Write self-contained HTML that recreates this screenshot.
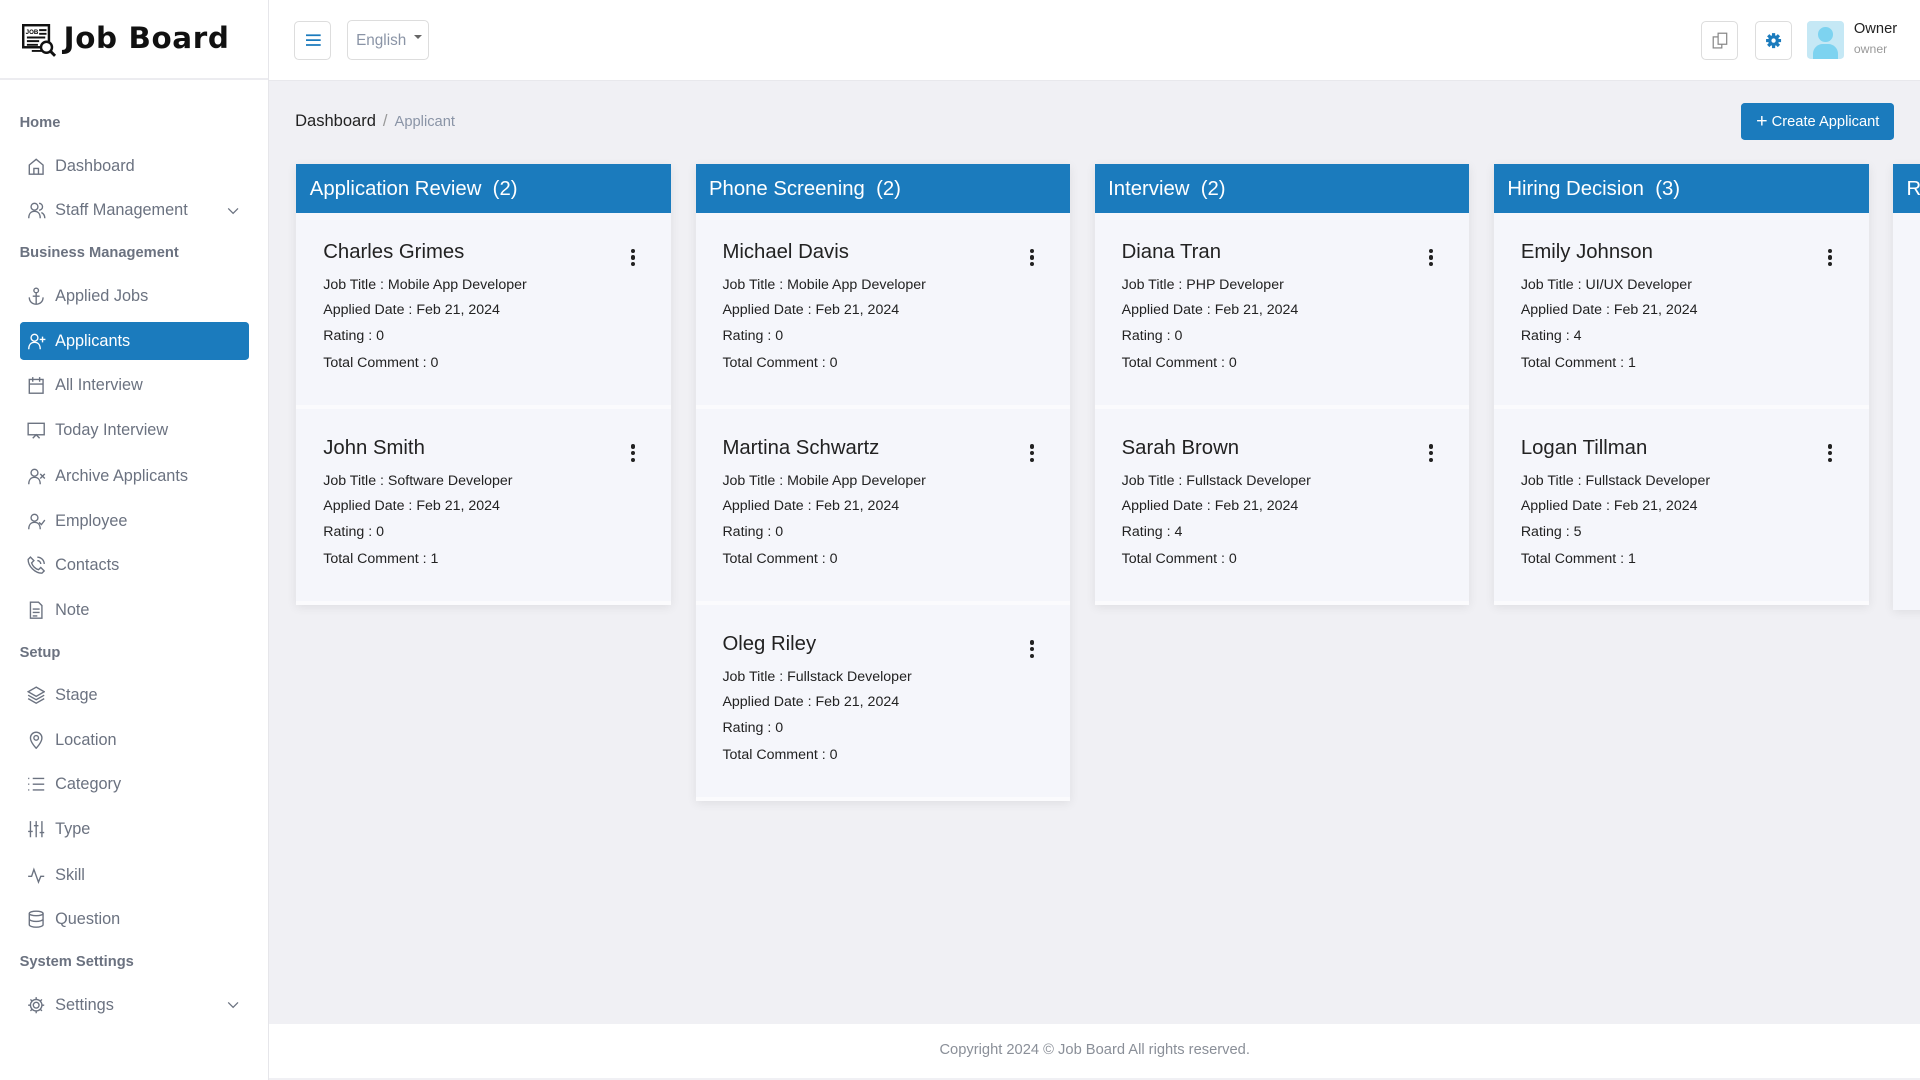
<!DOCTYPE html>
<html><head><meta charset="utf-8"><style>
html,body{margin:0;padding:0;}
body{width:1568px;height:882px;zoom:1.22449;position:relative;overflow:hidden;background:#f0f0f4;font-family:"Liberation Sans",sans-serif;color:#222;}
.a{position:absolute;}
#sb{left:0;top:0;width:219px;height:882px;background:#fff;border-right:1px solid #e6e6ea;}
#logo{left:0;top:0;width:219px;height:64px;border-bottom:2px solid #ececf0;}
.sec{left:16px;font-size:12px;font-weight:bold;color:#6b7280;}
.it{left:45px;font-size:13.3px;color:#6b7280;}
#hdr{left:220px;top:0;width:1348px;height:65px;background:#fff;border-bottom:1px solid #e8e8ec;}
.btn{border:1px solid #ddd;border-radius:4px;background:#fff;}
.col{width:306px;background:#f5f6fb;box-shadow:0 2px 8px rgba(0,0,0,.08);}
.ch{height:40px;background:#1b7bbd;color:#fff;font-size:16.6px;line-height:41px;padding-left:11px;box-sizing:border-box;}
.card{position:relative;height:160px;border-bottom:4px solid #fbfbfd;box-sizing:border-box;}
.card .n{position:absolute;left:22px;top:23px;font-size:16.6px;color:#222;}
.card .l{position:absolute;left:22px;font-size:11.6px;color:#222;}
.dots{position:absolute;left:273px;top:29px;width:4px;}
.dots i{display:block;width:3.5px;height:3.5px;border-radius:50%;background:#222;margin-bottom:2px;}
</style></head><body>
<div id="sb" class="a"></div>
<div id="logo" class="a">
<svg class="a" style="left:18px;top:20px" width="28" height="28" viewBox="0 0 28 28"><rect x="1" y="1" width="21" height="18" fill="none" stroke="#111" stroke-width="2"/><text x="3" y="8" font-size="5" font-weight="bold" font-family="Liberation Sans">JOB</text><path d="M14 5h6M14 8h6M4 11h15M4 14h10M4 17h9M8 22h8" stroke="#111" stroke-width="1.6"/><circle cx="20" cy="19" r="4.5" fill="#fff" stroke="#111" stroke-width="2"/><path d="M23 22l4 4" stroke="#111" stroke-width="2.4"/></svg>
<div class="a" style="left:52px;top:17px;font-size:24px;font-weight:900;letter-spacing:.5px;color:#111;font-family:'DejaVu Sans','Liberation Sans',sans-serif;">Job Board</div>
</div>
<div class="a sec" style="top:94px">Home</div>
<div class="a sec" style="top:200px">Business Management</div>
<div class="a sec" style="top:527px">Setup</div>
<div class="a sec" style="top:779px">System Settings</div>
<div class="a" style="left:16px;top:263px;width:187px;height:31px;background:#1b7bbd;border-radius:3px;"></div>
<svg class="a" style="left:22px;top:128px" width="15" height="15" viewBox="0 0 16 16" fill="none" stroke="#6b7280" stroke-width="1.2"><path d="M2 7l6-5 6 5v8H2z M6 15v-5h4v5"/></svg>
<div class="a it" style="top:128px">Dashboard</div>
<svg class="a" style="left:22px;top:164px" width="16" height="15" viewBox="0 0 16 16" fill="none" stroke="#6b7280" stroke-width="1.2"><circle cx="6" cy="5" r="3"/><path d="M1 15c0-4 2-6 5-6s5 2 5 6M10 2a3 3 0 010 6M12 10c2 1 3 3 3 5"/></svg>
<div class="a it" style="top:164px">Staff Management</div>
<svg class="a" style="left:185px;top:168px" width="10" height="8" viewBox="0 0 10 8" fill="none" stroke="#6b7280"><path d="M1 2l4 4 4-4"/></svg>
<svg class="a" style="left:22px;top:234px" width="15" height="15" viewBox="0 0 16 16" fill="none" stroke="#6b7280" stroke-width="1.2"><circle cx="8" cy="3" r="2"/><path d="M8 5v10M2 9c0 4 3 6 6 6s6-2 6-6M5 8h6"/></svg>
<div class="a it" style="top:234px">Applied Jobs</div>
<svg class="a" style="left:22px;top:271px" width="16" height="15" viewBox="0 0 16 16" fill="none" stroke="#fff" stroke-width="1.2"><circle cx="6" cy="5" r="3"/><path d="M1 15c0-4 2-6 5-6s5 2 5 6M13 4v5M10.5 6.5h5"/></svg>
<div class="a it" style="top:271px;color:#fff">Applicants</div>
<svg class="a" style="left:22px;top:307px" width="15" height="15" viewBox="0 0 16 16" fill="none" stroke="#6b7280" stroke-width="1.2"><rect x="2" y="3" width="12" height="12"/><path d="M2 7h12M5 1v4M11 1v4"/></svg>
<div class="a it" style="top:307px">All Interview</div>
<svg class="a" style="left:22px;top:344px" width="15" height="15" viewBox="0 0 16 16" fill="none" stroke="#6b7280" stroke-width="1.2"><rect x="1" y="2" width="14" height="10"/><path d="M5 15l3-3 3 3"/></svg>
<div class="a it" style="top:344px">Today Interview</div>
<svg class="a" style="left:22px;top:381px" width="16" height="15" viewBox="0 0 16 16" fill="none" stroke="#6b7280" stroke-width="1.2"><circle cx="6" cy="5" r="3"/><path d="M1 15c0-4 2-6 5-6s5 2 5 6M11 6l4 4M15 6l-4 4"/></svg>
<div class="a it" style="top:381px">Archive Applicants</div>
<svg class="a" style="left:22px;top:418px" width="16" height="15" viewBox="0 0 16 16" fill="none" stroke="#6b7280" stroke-width="1.2"><circle cx="6" cy="5" r="3"/><path d="M1 15c0-4 2-6 5-6s5 2 5 6M10 9l2 2 3-4"/></svg>
<div class="a it" style="top:418px">Employee</div>
<svg class="a" style="left:22px;top:454px" width="15" height="15" viewBox="0 0 16 16" fill="none" stroke="#6b7280" stroke-width="1.2"><path d="M3 1l3 3-2 2c1 3 3 5 6 6l2-2 3 3-2 2C7 15 1 9 1 3z M9 1a6 6 0 016 6M9 4a3 3 0 013 3"/></svg>
<div class="a it" style="top:454px">Contacts</div>
<svg class="a" style="left:22px;top:491px" width="15" height="15" viewBox="0 0 16 16" fill="none" stroke="#6b7280" stroke-width="1.2"><path d="M3 1h7l3 3v11H3z M5 7h6M5 10h6M5 13h4"/></svg>
<div class="a it" style="top:491px">Note</div>
<svg class="a" style="left:22px;top:560px" width="15" height="15" viewBox="0 0 16 16" fill="none" stroke="#6b7280" stroke-width="1.2"><path d="M8 1l7 4-7 4-7-4z M1 8l7 4 7-4M1 11l7 4 7-4"/></svg>
<div class="a it" style="top:560px">Stage</div>
<svg class="a" style="left:22px;top:597px" width="15" height="15" viewBox="0 0 16 16" fill="none" stroke="#6b7280" stroke-width="1.2"><path d="M8 15s5-5 5-9a5 5 0 00-10 0c0 4 5 9 5 9z"/><circle cx="8" cy="6" r="2"/></svg>
<div class="a it" style="top:597px">Location</div>
<svg class="a" style="left:22px;top:633px" width="15" height="15" viewBox="0 0 16 16" fill="none" stroke="#6b7280" stroke-width="1.2"><path d="M5 3h10M5 8h10M5 13h10M1 3h1M1 8h1M1 13h1"/></svg>
<div class="a it" style="top:633px">Category</div>
<svg class="a" style="left:22px;top:670px" width="15" height="15" viewBox="0 0 16 16" fill="none" stroke="#6b7280" stroke-width="1.2"><path d="M3 1v14M8 1v14M13 1v14M1 10h4M6 5h4M11 11h4"/></svg>
<div class="a it" style="top:670px">Type</div>
<svg class="a" style="left:22px;top:707px" width="15" height="15" viewBox="0 0 16 16" fill="none" stroke="#6b7280" stroke-width="1.2"><path d="M1 9h3l2-6 4 11 2-5h3"/></svg>
<div class="a it" style="top:707px">Skill</div>
<svg class="a" style="left:22px;top:743px" width="15" height="15" viewBox="0 0 16 16" fill="none" stroke="#6b7280" stroke-width="1.2"><ellipse cx="8" cy="3" rx="6" ry="2"/><path d="M2 3v10c0 1 3 2 6 2s6-1 6-2V3M2 8c0 1 3 2 6 2s6-1 6-2"/></svg>
<div class="a it" style="top:743px">Question</div>
<svg class="a" style="left:22px;top:813px" width="15" height="15" viewBox="0 0 16 16" fill="none" stroke="#6b7280" stroke-width="1.2"><circle cx="8" cy="8" r="2.5"/><path d="M8 1v2M8 13v2M1 8h2M13 8h2M3 3l1.5 1.5M11.5 11.5L13 13M3 13l1.5-1.5M11.5 4.5L13 3"/><circle cx="8" cy="8" r="5"/></svg>
<div class="a it" style="top:813px">Settings</div>
<svg class="a" style="left:185px;top:817px" width="10" height="8" viewBox="0 0 10 8" fill="none" stroke="#6b7280"><path d="M1 2l4 4 4-4"/></svg>

<div id="hdr" class="a"></div>
<div class="a btn" style="left:240px;top:17px;width:29px;height:30px;"><svg class="a" style="left:9px;top:10px" width="12" height="10" viewBox="0 0 12 10" stroke="#1b7bbd" stroke-width="1.4"><path d="M0 1h12M0 5h12M0 9h12"/></svg></div>
<div class="a btn" style="left:283px;top:16px;width:66px;height:31px;"><span class="a" style="left:7px;top:9px;font-size:12.5px;color:#8a94a6">English</span><span class="a" style="left:54px;top:12px;border:4px solid transparent;border-top:4px solid #666;"></span></div>
<div class="a btn" style="left:1389px;top:17px;width:29px;height:30px;"><svg class="a" style="left:8px;top:8px" width="14" height="14" viewBox="0 0 14 14" fill="none" stroke="#888" stroke-width="1"><rect x="1" y="4" width="7" height="9"/><rect x="5" y="1" width="7" height="9" fill="#fff"/></svg></div>
<div class="a btn" style="left:1433px;top:17px;width:29px;height:30px;"><svg class="a" style="left:8px;top:8px" width="14" height="14" viewBox="0 0 16 16"><circle cx="8" cy="8" r="5" fill="#1b7bbd"/><path d="M8 1v14M1 8h14M3 3l10 10M13 3L3 13" stroke="#1b7bbd" stroke-width="3"/><circle cx="8" cy="8" r="2" fill="#fff"/></svg></div>
<div class="a" style="left:1476px;top:17px;width:30px;height:31px;background:#c5e8f5;border-radius:3px;overflow:hidden;"><div class="a" style="left:9px;top:5px;width:12px;height:12px;border-radius:50%;background:#7dd3f0"></div><div class="a" style="left:5px;top:19px;width:20px;height:14px;border-radius:8px 8px 0 0;background:#7dd3f0"></div></div>
<div class="a" style="left:1514px;top:17px;font-size:12px;color:#222">Owner</div>
<div class="a" style="left:1514px;top:34px;font-size:10px;color:#999">owner</div>

<div class="a" style="left:241px;top:91px;font-size:13.5px;color:#222">Dashboard <span style="color:#999;margin:0 2px">/</span> <span style="color:#8a94a6;font-size:12px">Applicant</span></div>
<div class="a" style="left:1422px;top:84px;width:125px;height:30px;background:#1b7bbd;border-radius:3px;color:#fff;font-size:12px;line-height:30px;text-align:center;"><span style="font-size:16px;vertical-align:-1px">+</span> Create Applicant</div>

<div class="a col" style="left:242px;top:134px;">
<div class="ch">Application Review&nbsp; (2)</div>
<div class="card"><div class="n">Charles Grimes</div><div class="dots"><i></i><i></i><i></i></div><div class="l" style="top:52px">Job Title : Mobile App Developer</div><div class="l" style="top:73px">Applied Date : Feb 21, 2024</div><div class="l" style="top:94px">Rating : 0</div><div class="l" style="top:116px">Total Comment : 0</div></div>
<div class="card"><div class="n">John Smith</div><div class="dots"><i></i><i></i><i></i></div><div class="l" style="top:52px">Job Title : Software Developer</div><div class="l" style="top:73px">Applied Date : Feb 21, 2024</div><div class="l" style="top:94px">Rating : 0</div><div class="l" style="top:116px">Total Comment : 1</div></div>
</div>
<div class="a col" style="left:568px;top:134px;">
<div class="ch">Phone Screening&nbsp; (2)</div>
<div class="card"><div class="n">Michael Davis</div><div class="dots"><i></i><i></i><i></i></div><div class="l" style="top:52px">Job Title : Mobile App Developer</div><div class="l" style="top:73px">Applied Date : Feb 21, 2024</div><div class="l" style="top:94px">Rating : 0</div><div class="l" style="top:116px">Total Comment : 0</div></div>
<div class="card"><div class="n">Martina Schwartz</div><div class="dots"><i></i><i></i><i></i></div><div class="l" style="top:52px">Job Title : Mobile App Developer</div><div class="l" style="top:73px">Applied Date : Feb 21, 2024</div><div class="l" style="top:94px">Rating : 0</div><div class="l" style="top:116px">Total Comment : 0</div></div>
<div class="card"><div class="n">Oleg Riley</div><div class="dots"><i></i><i></i><i></i></div><div class="l" style="top:52px">Job Title : Fullstack Developer</div><div class="l" style="top:73px">Applied Date : Feb 21, 2024</div><div class="l" style="top:94px">Rating : 0</div><div class="l" style="top:116px">Total Comment : 0</div></div>
</div>
<div class="a col" style="left:894px;top:134px;">
<div class="ch">Interview&nbsp; (2)</div>
<div class="card"><div class="n">Diana Tran</div><div class="dots"><i></i><i></i><i></i></div><div class="l" style="top:52px">Job Title : PHP Developer</div><div class="l" style="top:73px">Applied Date : Feb 21, 2024</div><div class="l" style="top:94px">Rating : 0</div><div class="l" style="top:116px">Total Comment : 0</div></div>
<div class="card"><div class="n">Sarah Brown</div><div class="dots"><i></i><i></i><i></i></div><div class="l" style="top:52px">Job Title : Fullstack Developer</div><div class="l" style="top:73px">Applied Date : Feb 21, 2024</div><div class="l" style="top:94px">Rating : 4</div><div class="l" style="top:116px">Total Comment : 0</div></div>
</div>
<div class="a col" style="left:1220px;top:134px;">
<div class="ch">Hiring Decision&nbsp; (3)</div>
<div class="card"><div class="n">Emily Johnson</div><div class="dots"><i></i><i></i><i></i></div><div class="l" style="top:52px">Job Title : UI/UX Developer</div><div class="l" style="top:73px">Applied Date : Feb 21, 2024</div><div class="l" style="top:94px">Rating : 4</div><div class="l" style="top:116px">Total Comment : 1</div></div>
<div class="card"><div class="n">Logan Tillman</div><div class="dots"><i></i><i></i><i></i></div><div class="l" style="top:52px">Job Title : Fullstack Developer</div><div class="l" style="top:73px">Applied Date : Feb 21, 2024</div><div class="l" style="top:94px">Rating : 5</div><div class="l" style="top:116px">Total Comment : 1</div></div>
</div>
<div class="a col" style="left:1546px;top:134px;height:364px;">
<div class="ch">R</div>
</div>

<div class="a" style="left:220px;top:836px;width:1348px;height:44px;background:#fff;text-align:center;line-height:44px;font-size:12px;color:#8a8f98">Copyright 2024 © Job Board All rights reserved.</div>
</body></html>
